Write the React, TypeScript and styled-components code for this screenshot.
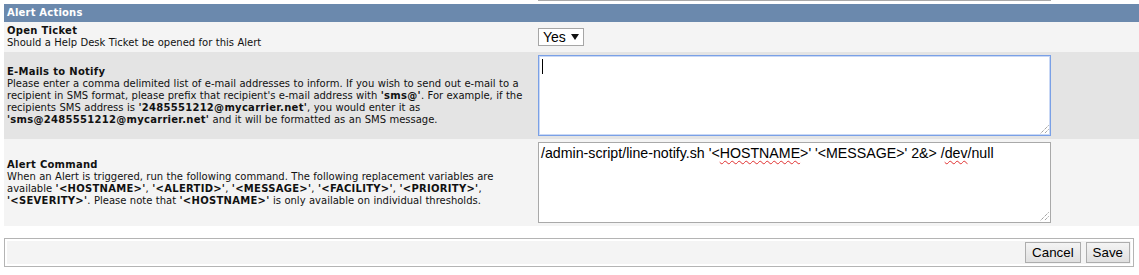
import React from "react";
import styled, { createGlobalStyle } from "styled-components";

const GlobalStyle = createGlobalStyle`
  html, body { margin: 0; padding: 0; background: #ffffff; overflow: hidden; }
  body {
    font-family: "DejaVu Sans", Verdana, sans-serif;
    font-size: 10px;
    color: #111111;
  }
`;

const Page = styled.div`
  padding-left: 4px;
  width: 1160px;
`;

const FormTable = styled.div`
  width: 1140px;
  display: flex;
  flex-direction: column;
`;

const RowGrid = styled.div<{ $bg?: string }>`
  display: grid;
  grid-template-columns: 531px 1fr;
  align-items: center;
  background: ${(p) => p.$bg ?? "transparent"};
`;

const PrevEdgeRow = styled(RowGrid)`
  margin-bottom: 3px;
`;

const PrevEdge = styled.div`
  margin-left: 3px;
  width: 513px;
  height: 1px;
  background: #a9a9a9;
`;

const SectionHeader = styled.div`
  background: #6b89ad;
  color: #ffffff;
  font-weight: bold;
  height: 18px;
  line-height: 18px;
  padding-left: 3px;
  letter-spacing: 0.2px;
`;

const LabelCell = styled.div`
  padding: 3px;
  line-height: 12px;
  word-spacing: 0.25px;
`;

const LabelTitle = styled.div`
  font-weight: bold;
  letter-spacing: 0.25px;
`;

const Strong = styled.b`
  font-weight: bold;
  letter-spacing: 0.28px;
`;

const ControlCell = styled.div`
  padding: 3px;
  display: flex;
  align-items: center;
`;

const SelectBox = styled.div`
  box-sizing: border-box;
  width: 46px;
  height: 18px;
  border: 1px solid #a6a6a6;
  background: #ffffff;
  display: flex;
  align-items: center;
  justify-content: space-between;
  padding: 0 4px 0 4px;
  font-family: "Liberation Sans", Arial, sans-serif;
  font-size: 14px;
  color: #000;
`;

const FieldBox = styled.div<{ $focused?: boolean }>`
  position: relative;
  box-sizing: border-box;
  width: 513px;
  height: 81px;
  background: #ffffff;
  border: 1px solid ${(p) => (p.$focused ? "#7aa0e6" : "#a9a9a9")};
  box-shadow: ${(p) => (p.$focused ? "inset 0 0 0 1px #c9d8f5" : "none")};
  padding: 2px 2px;
  font-family: "Liberation Sans", Arial, sans-serif;
  font-size: 14.2px;
  line-height: 17px;
  color: #000;
`;

const Caret = styled.span`
  position: absolute;
  left: 3px;
  top: 3px;
  width: 1px;
  height: 15px;
  background: #000;
`;

const Misspelled = styled.span`
  text-decoration: underline wavy #e03030;
  text-decoration-thickness: 1px;
  text-underline-offset: 2px;
  text-decoration-skip-ink: none;
`;

const Grip = styled.svg`
  position: absolute;
  right: 1px;
  bottom: 1px;
`;

const Footer = styled.div`
  margin-top: 12px;
  width: 1130px;
  box-sizing: border-box;
  border: 1px solid #b4b4b4;
  padding: 2px;
  background: #ffffff;
`;

const FooterInner = styled.div`
  background: #f4f4f4;
  display: flex;
  justify-content: flex-end;
  gap: 5px;
  padding: 1px 1px;
`;

const Button = styled.button`
  height: 21px;
  padding: 0 6px;
  border: 1px solid #adadad;
  border-radius: 0;
  background: linear-gradient(#f4f4f4, #e0e0e0);
  font-family: "Liberation Sans", Arial, sans-serif;
  font-size: 13.33px;
  color: #000;
  cursor: pointer;
`;

const ResizeGrip = () => (
  <Grip width="9" height="9" viewBox="0 0 9 9">
    <line x1="8.5" y1="0.5" x2="0.5" y2="8.5" stroke="#777" strokeWidth="1" strokeDasharray="1 1" />
    <line x1="8.5" y1="4.5" x2="4.5" y2="8.5" stroke="#777" strokeWidth="1" strokeDasharray="1 1" />
  </Grip>
);

const Arrow = () => (
  <svg width="8" height="6" viewBox="0 0 8 6">
    <polygon points="0,0 8,0 4,6" fill="#111" />
  </svg>
);

export default function App() {
  return (
    <>
      <GlobalStyle />
      <Page>
        <FormTable>
          <PrevEdgeRow>
            <div />
            <PrevEdge />
          </PrevEdgeRow>
          <SectionHeader>Alert Actions</SectionHeader>
          <RowGrid $bg="#f4f4f4">
            <LabelCell>
              <LabelTitle>Open Ticket</LabelTitle>
              Should a Help Desk Ticket be opened for this Alert
            </LabelCell>
            <ControlCell>
              <SelectBox>
                <span>Yes</span>
                <Arrow />
              </SelectBox>
            </ControlCell>
          </RowGrid>
          <RowGrid $bg="#e4e4e4">
            <LabelCell>
              <LabelTitle>E-Mails to Notify</LabelTitle>
              Please enter a comma delimited list of e-mail addresses to inform. If you wish to send out e-mail to a
              recipient in SMS format, please prefix that recipient's e-mail address with <Strong>'sms@'</Strong>.
              For example, if the recipients SMS address is <Strong>'2485551212@mycarrier.net'</Strong>, you would
              enter it as <Strong>'sms@2485551212@mycarrier.net'</Strong> and it will be formatted as an SMS
              message.
            </LabelCell>
            <ControlCell>
              <FieldBox $focused>
                <Caret />
                <ResizeGrip />
              </FieldBox>
            </ControlCell>
          </RowGrid>
          <RowGrid $bg="#f4f4f4">
            <LabelCell>
              <LabelTitle>Alert Command</LabelTitle>
              When an Alert is triggered, run the following command. The following replacement variables are
              available <Strong>'&lt;HOSTNAME&gt;'</Strong>, <Strong>'&lt;ALERTID&gt;'</Strong>,{" "}
              <Strong>'&lt;MESSAGE&gt;'</Strong>, <Strong>'&lt;FACILITY&gt;'</Strong>,{" "}
              <Strong>'&lt;PRIORITY&gt;'</Strong>, <Strong>'&lt;SEVERITY&gt;'</Strong>. Please note that{" "}
              <Strong>'&lt;HOSTNAME&gt;'</Strong> is only available on individual thresholds.
            </LabelCell>
            <ControlCell>
              <FieldBox>
                /admin-script/line-notify.sh '&lt;<Misspelled>HOSTNAME</Misspelled>&gt;' '&lt;MESSAGE&gt;' 2&amp;&gt; /
                <Misspelled>dev</Misspelled>/null
                <ResizeGrip />
              </FieldBox>
            </ControlCell>
          </RowGrid>
        </FormTable>
        <Footer>
          <FooterInner>
            <Button>Cancel</Button>
            <Button>Save</Button>
          </FooterInner>
        </Footer>
      </Page>
    </>
  );
}
